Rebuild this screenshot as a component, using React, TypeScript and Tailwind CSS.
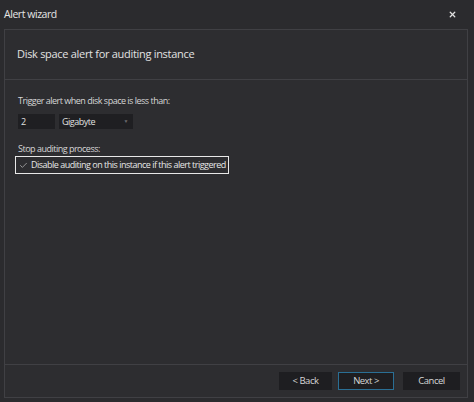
import { X, Check } from "lucide-react"

const font = { fontFamily: '"Open Sans", "Noto Sans", sans-serif' }

export default function App() {
  return (
    <div
      className="w-[474px] h-[402px] bg-[#2b2b2e] text-[#d6d6d6] flex flex-col overflow-hidden"
      style={font}
    >
      {/* Title bar */}
      <div className="h-[29px] flex items-center justify-between pl-[4px] pr-[17px] shrink-0">
        <span className="text-[10.5px] text-[#e6e6e6] tracking-[-0.45px]">Alert wizard</span>
        <X className="size-[9px] text-[#e0e0e0]" strokeWidth={3.5} />
      </div>

      {/* Wizard panel */}
      <div className="flex-1 ml-[4px] mr-[6px] mb-[4px] border border-[#404044] bg-[#2d2d30] flex flex-col">
        {/* Header */}
        <div className="h-[50px] border-b border-[#404044] flex items-center pl-[12px] shrink-0">
          <span className="text-[11px] text-[#e2e2e2] tracking-[-0.3px]">
            Disk space alert for auditing instance
          </span>
        </div>

        {/* Body */}
        <div className="flex-1 pl-[13px] pt-[13px] text-[9px] tracking-[-0.5px]">
          <div className="leading-[15px]">Trigger alert when disk space is less than:</div>
          <div className="flex gap-[4px] mt-[6px]">
            <div className="w-[37px] h-[15px] bg-[#1f1f22] flex items-center pl-[3px] text-[#e0e0e0]">
              2
            </div>
            <div className="w-[74px] h-[15px] bg-[#1f1f22] flex items-center justify-between pl-[3px] pr-[5px] text-[#e0e0e0]">
              <span>Gigabyte</span>
              <span className="text-[5px] text-[#6a6a6e]">▼</span>
            </div>
          </div>
          <div className="mt-[12px] leading-[15px]">Stop auditing process:</div>
          <div className="-ml-[3px] w-[214px] h-[18px] border border-[#e8e8e8] flex items-center pl-[3px] gap-[3px] text-[#e6e6e6] whitespace-nowrap">
            <Check className="size-[9px] text-[#b5b5b5] shrink-0" strokeWidth={2} />
            <span>Disable auditing on this instance if this alert triggered</span>
          </div>
        </div>

        {/* Footer */}
        <div className="h-[33px] border-t border-[#404044] flex items-center justify-end gap-[6px] pr-[7px] shrink-0 text-[9.5px] tracking-[-0.5px]">
          <button className="w-[53px] h-[18px] bg-[#1e1e21] text-[#d6d6d6]">&lt; Back</button>
          <button className="w-[56px] h-[18px] bg-[#1e1e21] border border-[#2a6f95] text-[#d6d6d6]">
            Next &gt;
          </button>
          <button className="w-[57px] h-[18px] bg-[#1e1e21] ml-[3px] text-[#d6d6d6]">Cancel</button>
        </div>
      </div>
    </div>
  )
}
